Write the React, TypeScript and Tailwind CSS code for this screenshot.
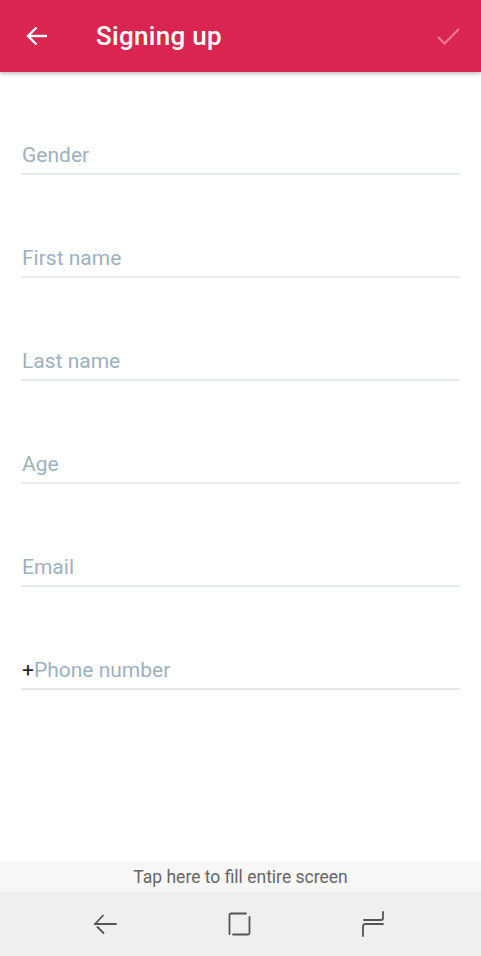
import React from 'react';

const fields = ['Gender', 'First name', 'Last name', 'Age', 'Email'];

export default function App() {
  return (
    <div
      className="flex h-[956px] w-[481px] flex-col overflow-hidden bg-white"
      style={{ fontFamily: 'Roboto, "Noto Sans", sans-serif' }}
    >
      {/* header */}
      <div className="relative z-10 flex h-[72px] shrink-0 items-center bg-[#d9254f] shadow-[0_2px_4px_rgba(0,0,0,0.25)]">
        <svg className="ml-[25px]" width="24" height="24" viewBox="0 0 24 24" fill="none" stroke="white" strokeWidth="2.4">
          <path d="M22 12H3" />
          <path d="M11.5 3.5L3 12l8.5 8.5" />
        </svg>
        <div className="ml-[47px] text-[26px] font-medium tracking-[0.3px] text-white">Signing up</div>
        <svg className="ml-auto mr-[20px]" width="26" height="26" viewBox="0 0 26 26" fill="none" stroke="white" strokeOpacity="0.4" strokeWidth="2.2">
          <path d="M3 14l6.5 6.5L24 6" />
        </svg>
      </div>

      {/* form */}
      <div className="flex flex-col px-[21px]">
        {fields.map((f) => (
          <div key={f} className="mt-[71px] border-b-2 border-[#e4eaee] pb-[6px]">
            <div className="h-[24px] pl-px text-[21px] leading-[24px] text-[#9db1bf]">{f}</div>
          </div>
        ))}
        <div className="mt-[71px] border-b-2 border-[#e4eaee] pb-[6px]">
          <div className="flex h-[24px] items-center text-[21px] leading-[24px]">
            <span className="pl-px text-[#1c2a36]">+</span>
            <span className="text-[#9db1bf]">Phone number</span>
          </div>
        </div>
      </div>

      <div className="flex-1" />

      {/* fill screen hint */}
      <div className="flex h-[30px] shrink-0 items-center justify-center bg-[#f7f7f7] text-[17.5px] text-[#666666]">
        Tap here to fill entire screen
      </div>

      {/* nav bar */}
      <div className="flex h-[64px] shrink-0 items-center gap-[110px] bg-[#efefef] pl-[93px]">
        <svg width="24" height="24" viewBox="0 0 24 24" fill="none" stroke="#555" strokeWidth="1.8" strokeLinecap="round">
          <path d="M23 12H2" />
          <path d="M10 3.5L2 12" />
          <path d="M4.5 15L10.5 21" />
        </svg>
        <svg width="24" height="24" viewBox="0 0 24 24" fill="none" stroke="#555" strokeWidth="1.8" strokeLinecap="round">
          <path d="M19 1.5H4a1.5 1.5 0 0 0-1.5 1.5v19" />
          <path d="M6 22.5h15a1.5 1.5 0 0 0 1.5-1.5V5" />
        </svg>
        <svg width="24" height="26" viewBox="0 0 24 26" fill="none" stroke="#555" strokeWidth="1.8" strokeLinecap="round">
          <path d="M22 1v6a2 2 0 0 1-2 2H3" />
          <path d="M22 13H4a2 2 0 0 0-2 2v10" />
        </svg>
      </div>
    </div>
  );
}
